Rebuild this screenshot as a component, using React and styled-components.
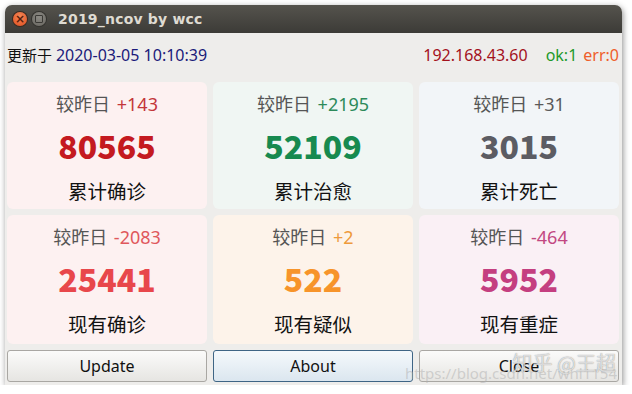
import React from "react";
import styled, { createGlobalStyle } from "styled-components";

const GlobalStyle = createGlobalStyle`
  html, body {
    margin: 0;
    padding: 0;
    background: #ffffff;
  }
  body {
    font-family: "Noto Sans", "Noto Sans CJK SC", sans-serif;
  }
`;

const stats = [
  { delta: "+143", value: "80565", label: "累计确诊", bg: "#fdf1f1", deltaColor: "#c3363a", color: "#c41a20" },
  { delta: "+2195", value: "52109", label: "累计治愈", bg: "#f0f6f3", deltaColor: "#2d8a5a", color: "#178a4f" },
  { delta: "+31", value: "3015", label: "累计死亡", bg: "#f2f5f8", deltaColor: "#5a5a5a", color: "#5c5c63" },
  { delta: "-2083", value: "25441", label: "现有确诊", bg: "#fdf1f1", deltaColor: "#e0585c", color: "#e8474b" },
  { delta: "+2", value: "522", label: "现有疑似", bg: "#fdf3ea", deltaColor: "#ee9a3c", color: "#f7942a" },
  { delta: "-464", value: "5952", label: "现有重症", bg: "#faf0f5", deltaColor: "#c24882", color: "#c43f80" },
];

const App = () => {
  return (
    <>
      <GlobalStyle />
      <Page>
        <Window>
          <TitleBar>
            <CloseDot>×</CloseDot>
            <MinDot>
              <span />
            </MinDot>
            <Title>2019_ncov by wcc</Title>
          </TitleBar>
          <Body>
            <Header>
              <Updated>
                更新于 <Time>2020-03-05 10:10:39</Time>
              </Updated>
              <Status>
                <Ip>192.168.43.60</Ip>
                <Ok>ok:1</Ok>
                <Err>err:0</Err>
              </Status>
            </Header>
            <Grid>
              {stats.map((s) => (
                <Card key={s.label} $bg={s.bg}>
                  <Delta>
                    较昨日 <DeltaNum $color={s.deltaColor}>{s.delta}</DeltaNum>
                  </Delta>
                  <Value $color={s.color}>{s.value}</Value>
                  <Label>{s.label}</Label>
                </Card>
              ))}
            </Grid>
            <Buttons>
              <Button>Update</Button>
              <Button $focused>About</Button>
              <Button>Close</Button>
            </Buttons>
          </Body>
          <Watermark>
            <Url>https://blog.csdn.net/whl1154</Url>
            <Zhihu>知乎 @王超</Zhihu>
          </Watermark>
        </Window>
      </Page>
    </>
  );
};

const Page = styled.div`
  padding: 5px 0 0 5px;
`;

const Window = styled.div`
  position: relative;
  width: 617px;
  height: 380px;
  background: #eeedeb;
  border-radius: 7px 7px 0 0;
  box-shadow: 1px 2px 6px rgba(0, 0, 0, 0.45);
  overflow: hidden;
`;

const TitleBar = styled.div`
  height: 28px;
  display: flex;
  align-items: center;
  padding-left: 8px;
  background: linear-gradient(#55534d, #3c3b37);
`;

const CloseDot = styled.div`
  width: 14px;
  height: 14px;
  border-radius: 50%;
  background: radial-gradient(circle at 50% 35%, #f58a5a, #df4b1c);
  box-shadow: 0 0 0 1px #3a2a20;
  color: #5a1e0c;
  font: bold 12px/14px "DejaVu Sans", sans-serif;
  text-align: center;
`;

const MinDot = styled.div`
  width: 14px;
  height: 14px;
  margin-left: 5px;
  border-radius: 50%;
  background: radial-gradient(circle at 50% 35%, #8c8a84, #67655f);
  box-shadow: 0 0 0 1px #33322e;
  display: flex;
  align-items: center;
  justify-content: center;
  & span {
    width: 6px;
    height: 6px;
    border: 1px solid #3a3935;
    border-radius: 1px;
  }
`;

const Title = styled.div`
  margin-left: 12px;
  color: #dfdbd2;
  font: bold 14px "DejaVu Sans", sans-serif;
  letter-spacing: 0.2px;
`;

const Body = styled.div`
  padding: 0 3px 0 2px;
`;

const Header = styled.div`
  height: 49px;
  padding-bottom: 5px;
  box-sizing: border-box;
  display: flex;
  align-items: center;
  justify-content: space-between;
  font-size: 15px;
`;

const Updated = styled.div`
  color: #111;
`;

const Time = styled.span`
  color: #1b1a7a;
  font-size: 16px;
`;

const Status = styled.div`
  display: flex;
  align-items: center;
  font-size: 16px;
`;

const Ip = styled.span`
  color: #a3111c;
  margin-right: 18px;
`;

const Ok = styled.span`
  color: #1e9a2a;
  margin-right: 6px;
`;

const Err = styled.span`
  color: #ef5e2a;
`;

const Grid = styled.div`
  display: grid;
  grid-template-columns: repeat(3, 200px);
  grid-template-rows: 127px 129px;
  column-gap: 6px;
  row-gap: 6px;
`;

const Card = styled.div`
  background: ${(p) => p.$bg};
  border-radius: 6px;
  display: flex;
  flex-direction: column;
  align-items: center;
  padding-top: 9px;
  box-sizing: border-box;
`;

const Delta = styled.div`
  font-size: 18px;
  line-height: 26px;
  color: #555;
  word-spacing: 2px;
`;

const DeltaNum = styled.span`
  color: ${(p) => p.$color};
`;

const Value = styled.div`
  margin-top: 6px;
  font-family: "Noto Sans CJK SC", "Noto Sans", sans-serif;
  font-size: 32px;
  line-height: 44px;
  font-weight: 900;
  color: ${(p) => p.$color};
`;

const Label = styled.div`
  margin-top: 10px;
  font-family: "Noto Sans CJK SC", sans-serif;
  font-size: 19.5px;
  line-height: 28px;
  font-weight: 400;
  color: #111;
`;

const Buttons = styled.div`
  margin-top: 6px;
  display: grid;
  grid-template-columns: repeat(3, 200px);
  column-gap: 6px;
`;

const Button = styled.button`
  height: 32px;
  padding: 0;
  border: 1px solid ${(p) => (p.$focused ? "#3f6585" : "#a9a7a3")};
  border-radius: 3px;
  background: ${(p) =>
    p.$focused
      ? "linear-gradient(#f5f9fc, #dbe6ef)"
      : "linear-gradient(#fbfbfa, #e6e5e2)"};
  font-family: "Noto Sans", sans-serif;
  font-size: 16px;
  color: #111;
`;

const Watermark = styled.div`
  position: absolute;
  right: 2px;
  bottom: 1px;
  width: 215px;
  height: 36px;
  pointer-events: none;
`;

const Url = styled.div`
  position: absolute;
  left: 0;
  bottom: 1px;
  font-size: 15px;
  color: rgba(175, 175, 175, 0.5);
  white-space: nowrap;
`;

const Zhihu = styled.div`
  position: absolute;
  right: 4px;
  top: 0;
  font-family: "Noto Sans CJK SC", sans-serif;
  font-size: 20px;
  color: rgba(255, 255, 255, 0.7);
  text-shadow: 0 0 1px rgba(80, 80, 80, 0.7);
  white-space: nowrap;
`;

export default App;
